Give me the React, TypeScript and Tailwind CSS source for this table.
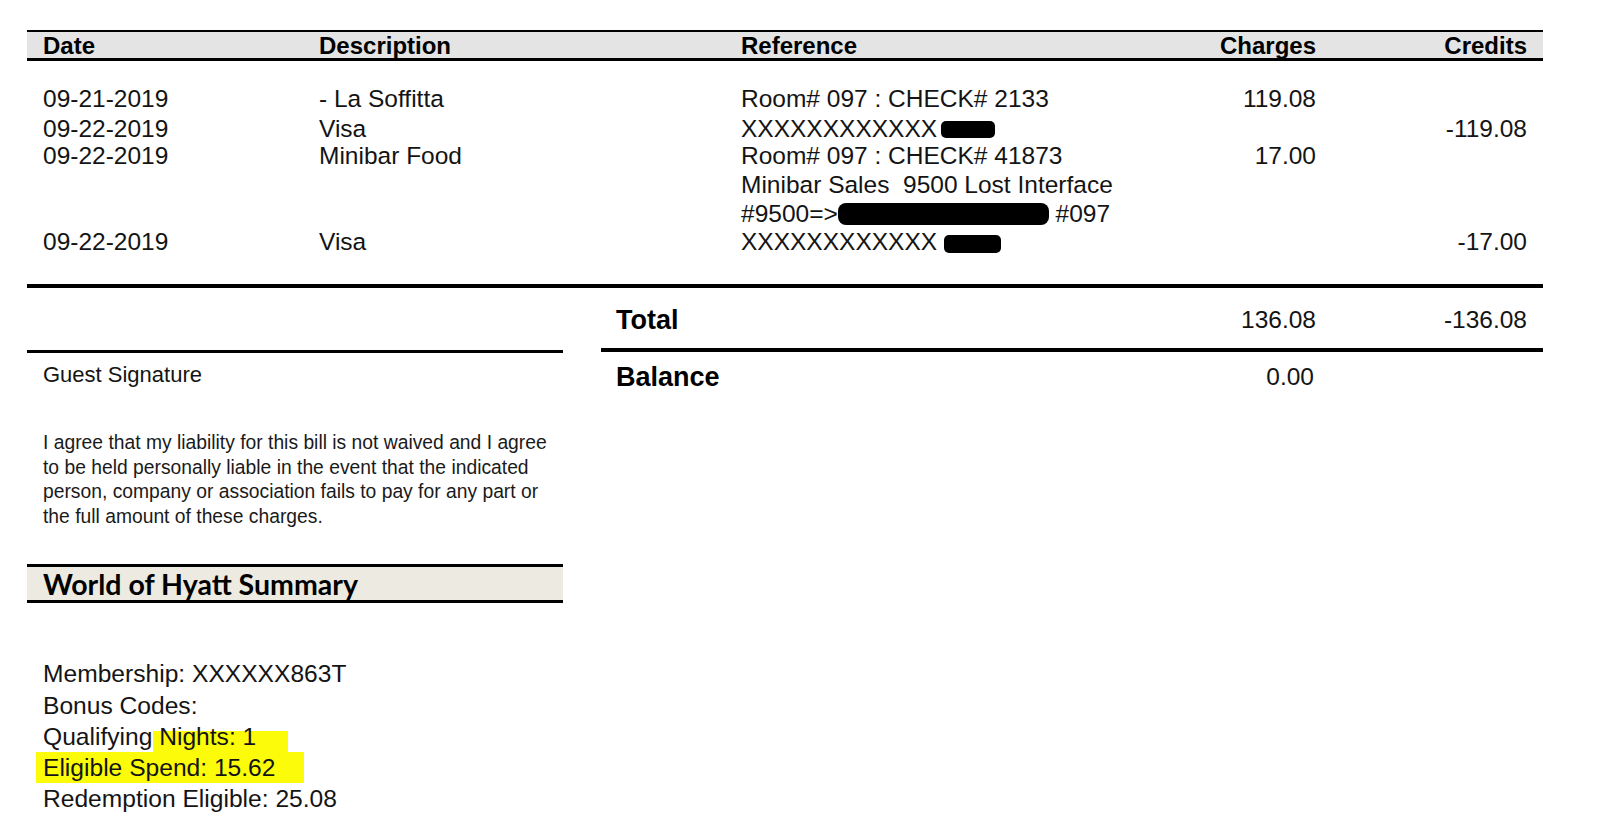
import React from 'react';

const cols = "grid grid-cols-[276px_422px_1fr_150px_211px] pl-4 pr-4";

const Blob = ({ className }: { className: string }) => (
  <span className={`inline-block bg-black align-middle rounded-[5px] ${className}`}></span>
);

const App = () => {
  return (
    <div className="min-h-screen bg-white font-['Liberation_Sans',Arial,sans-serif] text-[#141414]">
      <div className="pt-[30px] pl-[27px] w-[1543px]">
        {/* folio header */}
        <div className={`${cols} border-t-2 border-b-[3px] border-black bg-[#e4e4e4] h-[31px] pt-[1px] text-[24px] leading-[26px] font-bold text-black`}>
          <div>Date</div>
          <div>Description</div>
          <div>Reference</div>
          <div className="text-right">Charges</div>
          <div className="text-right">Credits</div>
        </div>

        <div className="pt-[23.5px] pb-[26.5px] border-b-4 border-black text-[24.5px] leading-[28.8px]">
          <div className={cols}>
            <div>09-21-2019</div>
            <div>- La Soffitta</div>
            <div>Room# 097 : CHECK# 2133</div>
            <div className="text-right">119.08</div>
            <div></div>
          </div>
          <div className={`${cols} pt-[1.5px] -mb-[1.5px]`}>
            <div>09-22-2019</div>
            <div>Visa</div>
            <div className="whitespace-nowrap">
              XXXXXXXXXXXX<Blob className="w-[54px] h-[17px] ml-[4px] -mt-[2px]" />
            </div>
            <div></div>
            <div className="text-right">-119.08</div>
          </div>
          <div className={cols}>
            <div>09-22-2019</div>
            <div>Minibar Food</div>
            <div className="whitespace-pre">
              <div>Room# 097 : CHECK# 41873</div>
              <div>Minibar Sales  9500 Lost Interface</div>
              <div>
                #9500=&gt;<Blob className="w-[211px] h-[22px] ml-[0px] -mt-[2px] rounded-[8px]" /> #097
              </div>
            </div>
            <div className="text-right">17.00</div>
            <div></div>
          </div>
          <div className={cols}>
            <div>09-22-2019</div>
            <div>Visa</div>
            <div className="whitespace-nowrap">
              XXXXXXXXXXXX<Blob className="w-[57px] h-[18px] ml-[7px] -mt-[1px]" />
            </div>
            <div></div>
            <div className="text-right">-17.00</div>
          </div>
        </div>

        <div className="flex">
          {/* signature + loyalty */}
          <div className="w-[536px]">
            <div className="h-[62px]"></div>
            <div className="border-t-[3px] border-black pl-4 pt-[9px] text-[22px] leading-[26px]">Guest Signature</div>
            <div className="mt-[43.5px] pl-4 text-[19.3px] leading-[24.4px] text-[#1a1a1a]">
              I agree that my liability for this bill is not waived and I agree<br />
              to be held personally liable in the event that the indicated<br />
              person, company or association fails to pay for any part or<br />
              the full amount of these charges.
            </div>
            <div className="mt-[35px] border-t-[3px] border-b-[3px] border-black bg-[#eceae1] h-[39px] pl-4 font-['Lato',sans-serif] font-bold text-[28.5px] leading-[34px] text-black">
              World of Hyatt Summary
            </div>
            <div className="relative mt-[55.5px] pl-4 text-[24.6px] leading-[31.2px]">
              <div className="absolute left-[126px] top-[73px] w-[135px] h-[24px] bg-[#fbfb0a]"></div>
              <div className="absolute left-[9px] top-[94px] w-[268px] h-[31px] bg-[#fbfb0a]"></div>
              <div className="relative">Membership: XXXXXX863T</div>
              <div className="relative">Bonus Codes:</div>
              <div className="relative">Qualifying Nights: 1</div>
              <div className="relative">Eligible Spend: 15.62</div>
              <div className="relative">Redemption Eligible: 25.08</div>
            </div>
          </div>

          {/* totals */}
          <div className="w-[942px] ml-[38px]">
            <div className="grid grid-cols-[550px_150px_211px] pl-[15px] pr-4 pt-[17px] pb-[13px] leading-[30px] border-b-4 border-black">
              <div className="text-[27px] font-bold text-black">Total</div>
              <div className="text-right text-[24.5px]">136.08</div>
              <div className="text-right text-[24.5px]">-136.08</div>
            </div>
            <div className="grid grid-cols-[550px_150px_211px] pl-[15px] pr-4 pt-[10.5px] leading-[30px]">
              <div className="text-[27px] font-bold text-black">Balance</div>
              <div className="text-right text-[24.5px] pr-[2px]">0.00</div>
              <div></div>
            </div>
          </div>
        </div>
      </div>
    </div>
  );
};

export default App;
